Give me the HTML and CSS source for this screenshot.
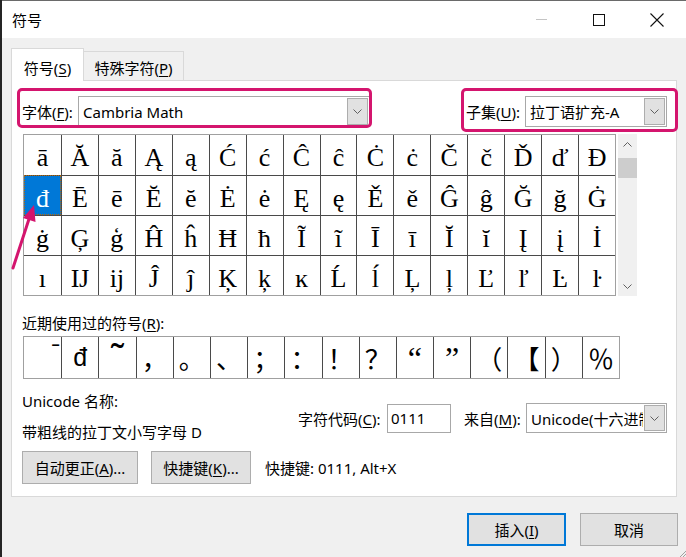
FILE: index.html
```html
<!DOCTYPE html>
<html lang="zh-CN">
<head>
<meta charset="utf-8">
<title>符号</title>
<link rel="stylesheet" href="styles.css">
</head>
<body>
<div class="window">
  <div class="titlebar">
    <span class="title">符号</span>
    <div class="caption">
      <div class="cap-btn"><span class="min-glyph"></span></div>
      <div class="cap-btn"><span class="max-glyph"></span></div>
      <div class="cap-btn"><svg width="14" height="14" viewBox="0 0 14 14"><path d="M0.5 0.5L13.5 13.5M13.5 0.5L0.5 13.5" stroke="#111" stroke-width="1.1" fill="none"/></svg></div>
    </div>
  </div>

  <div class="content">
    <div class="tabs">
      <div class="tab active">符号(<u>S</u>)</div>
      <div class="tab">特殊字符(<u>P</u>)</div>
    </div>

    <div class="panel">
      <div class="font-row">
        <span class="lbl lbl-font">字体(<u>F</u>):</span>
        <div class="combo combo-font">
          <span class="combo-text">Cambria Math</span>
          <span class="dd"><svg width="9" height="5" viewBox="0 0 9 5"><polyline points="0.5,0.5 4.5,4.5 8.5,0.5" fill="none" stroke="#606060" stroke-width="1"/></svg></span>
        </div>
        <span class="lbl lbl-subset">子集(<u>U</u>):</span>
        <div class="combo combo-subset">
          <span class="combo-text">拉丁语扩充-A</span>
          <span class="dd"><svg width="9" height="5" viewBox="0 0 9 5"><polyline points="0.5,0.5 4.5,4.5 8.5,0.5" fill="none" stroke="#606060" stroke-width="1"/></svg></span>
        </div>
      </div>

      <div class="grid-wrap">
        <div class="grid">
          <div class="cell">ā</div><div class="cell">Ă</div><div class="cell">ă</div><div class="cell">Ą</div><div class="cell">ą</div><div class="cell">Ć</div><div class="cell">ć</div><div class="cell">Ĉ</div><div class="cell">ĉ</div><div class="cell">Ċ</div><div class="cell">ċ</div><div class="cell">Č</div><div class="cell">č</div><div class="cell">Ď</div><div class="cell">ď</div><div class="cell">Đ</div>
          <div class="cell selected">đ</div><div class="cell">Ē</div><div class="cell">ē</div><div class="cell">Ĕ</div><div class="cell">ĕ</div><div class="cell">Ė</div><div class="cell">ė</div><div class="cell">Ę</div><div class="cell">ę</div><div class="cell">Ě</div><div class="cell">ě</div><div class="cell">Ĝ</div><div class="cell">ĝ</div><div class="cell">Ğ</div><div class="cell">ğ</div><div class="cell">Ġ</div>
          <div class="cell">ġ</div><div class="cell">Ģ</div><div class="cell">ģ</div><div class="cell">Ĥ</div><div class="cell">ĥ</div><div class="cell">Ħ</div><div class="cell">ħ</div><div class="cell">Ĩ</div><div class="cell">ĩ</div><div class="cell">Ī</div><div class="cell">ī</div><div class="cell">Ĭ</div><div class="cell">ĭ</div><div class="cell">Į</div><div class="cell">į</div><div class="cell">İ</div>
          <div class="cell">ı</div><div class="cell">Ĳ</div><div class="cell">ĳ</div><div class="cell">Ĵ</div><div class="cell">ĵ</div><div class="cell">Ķ</div><div class="cell">ķ</div><div class="cell">ĸ</div><div class="cell">Ĺ</div><div class="cell">ĺ</div><div class="cell">Ļ</div><div class="cell">ļ</div><div class="cell">Ľ</div><div class="cell">ľ</div><div class="cell">Ŀ</div><div class="cell">ŀ</div>
        </div>
        <div class="vscroll">
          <div class="sb-btn"><svg width="9" height="5" viewBox="0 0 9 5"><polyline points="0.5,4.5 4.5,0.5 8.5,4.5" fill="none" stroke="#606060" stroke-width="1"/></svg></div>
          <div class="sb-thumb"></div>
          <div class="sb-space"></div>
          <div class="sb-btn sb-down"><svg width="9" height="5" viewBox="0 0 9 5"><polyline points="0.5,0.5 4.5,4.5 8.5,0.5" fill="none" stroke="#606060" stroke-width="1"/></svg></div>
        </div>
      </div>

      <div class="recent-label">近期使用过的符号(<u>R</u>):</div>
      <div class="recent">
        <div class="rc rc-macron">ˉ</div>
        <div class="rc rc-sans">đ</div>
        <div class="rc rc-tilde">˜</div>
        <div class="rc">，</div>
        <div class="rc">。</div>
        <div class="rc">、</div>
        <div class="rc">；</div>
        <div class="rc">：</div>
        <div class="rc">！</div>
        <div class="rc">？</div>
        <div class="rc rc-quote">“</div>
        <div class="rc rc-quote">”</div>
        <div class="rc">（</div>
        <div class="rc">【</div>
        <div class="rc">）</div>
        <div class="rc">％</div>
      </div>

      <div class="info">
        <div class="info-left">
          <div class="info-line">Unicode 名称:</div>
          <div class="info-line info-name">带粗线的拉丁文小写字母 D</div>
        </div>
        <div class="info-right">
          <span class="lbl lbl-code">字符代码(<u>C</u>):</span>
          <div class="input">0111</div>
          <span class="lbl lbl-from">来自(<u>M</u>):</span>
          <div class="combo combo-from">
            <span class="combo-text">Unicode(十六进制)</span>
            <span class="dd"><svg width="9" height="5" viewBox="0 0 9 5"><polyline points="0.5,0.5 4.5,4.5 8.5,0.5" fill="none" stroke="#606060" stroke-width="1"/></svg></span>
          </div>
        </div>
      </div>

      <div class="btn-row">
        <div class="btn btn-auto">自动更正(<u>A</u>)...</div>
        <div class="btn btn-key">快捷键(<u>K</u>)...</div>
        <span class="shortcut">快捷键: 0111, Alt+X</span>
      </div>
    </div>

    <div class="footer">
      <div class="btn btn-default">插入(<u>I</u>)</div>
      <div class="btn btn-cancel">取消</div>
    </div>
  </div>

  <div class="mark mark-font"></div>
  <div class="mark mark-subset"></div>
  <svg class="arrow" width="36" height="74" viewBox="10 200 36 74">
    <line x1="13" y1="268" x2="29" y2="219" stroke="#d4156e" stroke-width="3" stroke-linecap="round"/>
    <polygon points="34,205 35.5,222 23,218" fill="#d4156e"/>
  </svg>
  <svg class="grip" width="7" height="7" viewBox="0 0 7 7"><path d="M7 1L1 7M7 4L4 7" stroke="#a0a0a0" stroke-width="1"/></svg>
</div>
</body>
</html>
```

FILE: styles.css
```css
* { box-sizing: border-box; }
html, body { margin: 0; padding: 0; }
body {
  width: 686px;
  height: 557px;
  overflow: hidden;
  background: #f0f0f0;
  font-family: "Noto Sans", "Noto Sans CJK SC", sans-serif;
  font-size: 15px;
  color: #000;
}
u { text-decoration: underline; text-underline-offset: 2px; text-decoration-thickness: 1px; }

.window {
  position: relative;
  width: 686px;
  height: 557px;
  background: #f0f0f0;
  border-left: 2px solid #252525;
  display: flex;
  flex-direction: column;
}

/* title bar */
.titlebar {
  height: 38px;
  flex: none;
  background: #fff;
  border-top: 1px solid #6a6a6a;
  display: flex;
  align-items: center;
  padding-left: 10px;
}
.title { font-size: 15px; }
.caption { margin-left: auto; display: flex; height: 100%; }
.cap-btn { width: 58px; height: 100%; display: flex; align-items: center; justify-content: center; }
.min-glyph { width: 11px; height: 1px; background: #c4c4c4; }
.max-glyph { width: 12px; height: 12px; border: 1px solid #111; }

/* content */
.content { padding: 10px 0 0 9px; }
.tabs { display: flex; align-items: flex-end; height: 32px; }
.tab {
  width: 100px;
  height: 29px;
  padding-top: 3px;
  line-height: 27px;
  text-align: center;
  background: #f0f0f0;
  border: 1px solid #d9d9d9;
  border-left: none;
  border-bottom: none;
}
.tab.active {
  width: 73px;
  height: 33px;
  padding-top: 5px;
  line-height: 28px;
  margin-bottom: -1px;
  background: #fff;
  border-left: 1px solid #d9d9d9;
  position: relative;
  z-index: 1;
}

.panel {
  width: 666px;
  height: 417px;
  background: #fff;
  border: 1px solid #d9d9d9;
  padding: 0 9px 0 10px;
}

/* font row */
.font-row { margin-top: 15px; height: 31px; display: flex; align-items: center; }
.lbl { white-space: nowrap; }
.lbl-font { width: 56px; }
.lbl-subset { margin-left: auto; width: 59px; }
.combo {
  display: flex;
  height: 31px;
  background: #fff;
  border: 1px solid #a8a8a8;
}
.combo-font { width: 292px; }
.combo-subset { width: 142px; }
.combo-text {
  flex: 1;
  min-width: 0;
  padding-left: 4px;
  display: flex;
  align-items: center;
  overflow: hidden;
  white-space: nowrap;
}
.dd {
  width: 21px;
  flex: none;
  margin: 1px;
  background: #e1e1e1;
  border: 1px solid #adadad;
  display: flex;
  align-items: center;
  justify-content: center;
}

/* symbol grid */
.grid-wrap { margin-top: 7px; height: 162px; display: flex; }
.grid {
  margin-left: 1px;
  width: 593px;
  height: 162px;
  border: 1px solid #a0a0a0;
  display: grid;
  grid-template-columns: repeat(16, 1fr);
  grid-template-rows: repeat(4, 1fr);
}
.cell {
  border-left: 1px solid #4a4a4a;
  border-top: 1px solid #4a4a4a;
  display: flex;
  align-items: center;
  justify-content: center;
  padding-top: 6px;
  font-family: "Liberation Serif", serif;
  font-size: 26px;
}
.cell:nth-child(16n+1) { border-left: none; }
.cell:nth-child(-n+16) { border-top: none; }
.cell.selected {
  background: #0078d7;
  color: #fff;
  outline: 1px dotted #b06a10;
  outline-offset: -1px;
}

.vscroll {
  margin-left: 2px;
  width: 19px;
  background: #f0f0f0;
  display: flex;
  flex-direction: column;
}
.sb-btn { height: 21px; display: flex; align-items: center; justify-content: center; }
.sb-down { height: 20px; }
.sb-thumb { margin-top: 3px; height: 20px; background: #cdcdcd; }
.sb-space { flex: 1; }

/* recent */
.recent-label { margin-top: 17px; line-height: 20px; }
.recent {
  margin-top: 3px;
  margin-left: 1px;
  width: 597px;
  height: 43px;
  border: 1px solid #a0a0a0;
  display: grid;
  grid-template-columns: repeat(16, 1fr);
}
.rc {
  border-left: 1px solid #4a4a4a;
  display: flex;
  align-items: center;
  justify-content: center;
  overflow: hidden;
  font-family: "Noto Sans CJK SC", sans-serif;
  font-size: 26px;
  line-height: 1;
}
.rc:first-child { border-left: none; }
.rc-macron {
  justify-content: flex-end;
  align-items: flex-start;
  font-family: "Liberation Sans", sans-serif;
  line-height: 26px;
  padding-top: 3px;
  padding-right: 1px;
}
.rc-sans { font-family: "Liberation Sans", sans-serif; font-size: 25px; line-height: normal; }
.rc-tilde {
  align-items: flex-start;
  font-family: "Liberation Sans", sans-serif;
  font-size: 38px;
  line-height: 38px;
  padding-top: 2px;
}
.rc-quote { font-family: "Liberation Serif", serif; font-size: 32px; }

/* info */
.info { margin-top: 12px; display: flex; }
.info-left { width: 276px; }
.info-line { line-height: 20px; }
.info-name { margin-top: 11px; }
.info-right { margin-top: 12px; height: 30px; display: flex; align-items: center; }
.lbl-code { width: 89px; }
.input {
  width: 64px;
  height: 29px;
  border: 1px solid #a8a8a8;
  padding-left: 3px;
  line-height: 26px;
}
.lbl-from { margin-left: 13px; width: 62px; }
.combo-from { width: 141px; height: 30px; }

/* buttons */
.btn-row { margin-top: 9px; display: flex; align-items: center; }
.btn {
  height: 33px;
  background: #e1e1e1;
  border: 1px solid #adadad;
  display: flex;
  align-items: center;
  justify-content: center;
  white-space: nowrap;
}
.btn-auto { width: 116px; }
.btn-key { width: 100px; margin-left: 13px; }
.shortcut { margin-left: 14px; }

.footer {
  margin-top: 16px;
  padding-right: 8px;
  display: flex;
  justify-content: flex-end;
  gap: 14px;
}
.btn-default {
  width: 99px;
  border-color: #0078d7;
  box-shadow: inset 0 0 0 1px #0078d7;
}
.btn-cancel { width: 98px; }

/* annotations drawn over the dialog */
.mark {
  position: absolute;
  border: 3px solid #d4156e;
  border-radius: 5px;
  z-index: 5;
}
.mark-font { left: 15px; top: 88px; width: 355px; height: 40px; }
.mark-subset { left: 459px; top: 88px; width: 217px; height: 44px; }
.arrow { position: absolute; left: 8px; top: 200px; z-index: 5; }
.grip { position: absolute; right: 0; bottom: 0; }
```
